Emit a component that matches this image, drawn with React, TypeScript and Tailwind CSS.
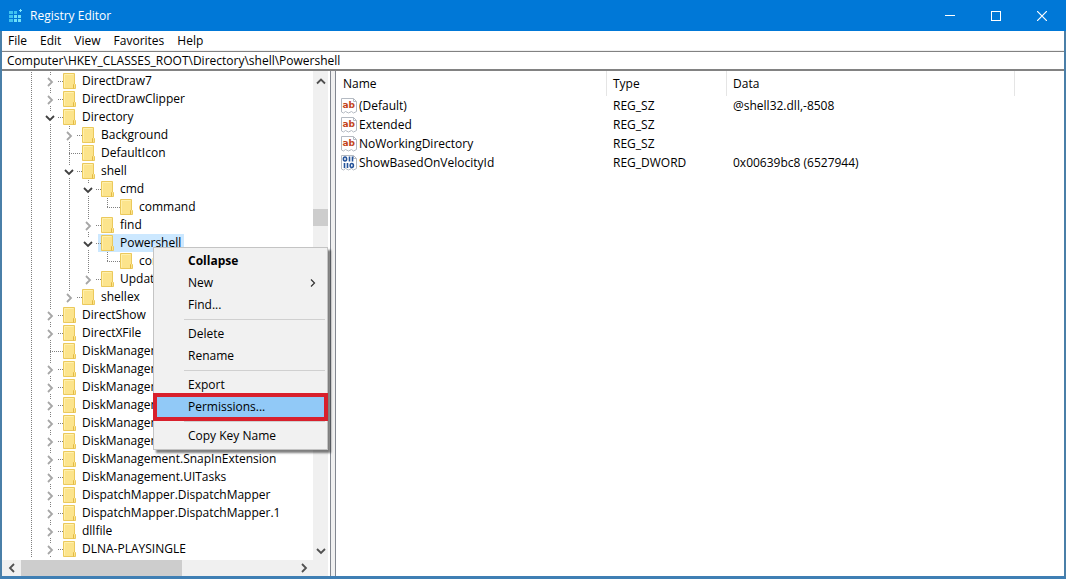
import React from "react";

type TreeNode = {
  name: string;
  depth: number;
  state: "open" | "closed" | "leaf";
  selected?: boolean;
};

const nodes: TreeNode[] = [
  { name: "DirectDraw7", depth: 0, state: "closed" },
  { name: "DirectDrawClipper", depth: 0, state: "closed" },
  { name: "Directory", depth: 0, state: "open" },
  { name: "Background", depth: 1, state: "closed" },
  { name: "DefaultIcon", depth: 1, state: "leaf" },
  { name: "shell", depth: 1, state: "open" },
  { name: "cmd", depth: 2, state: "open" },
  { name: "command", depth: 3, state: "leaf" },
  { name: "find", depth: 2, state: "closed" },
  { name: "Powershell", depth: 2, state: "open", selected: true },
  { name: "command", depth: 3, state: "leaf" },
  { name: "Update", depth: 2, state: "closed" },
  { name: "shellex", depth: 1, state: "closed" },
  { name: "DirectShow", depth: 0, state: "closed" },
  { name: "DirectXFile", depth: 0, state: "closed" },
  { name: "DiskManagement", depth: 0, state: "leaf" },
  { name: "DiskManagement", depth: 0, state: "closed" },
  { name: "DiskManagement", depth: 0, state: "closed" },
  { name: "DiskManagement", depth: 0, state: "closed" },
  { name: "DiskManagement", depth: 0, state: "closed" },
  { name: "DiskManagement", depth: 0, state: "closed" },
  { name: "DiskManagement.SnapInExtension", depth: 0, state: "closed" },
  { name: "DiskManagement.UITasks", depth: 0, state: "closed" },
  { name: "DispatchMapper.DispatchMapper", depth: 0, state: "closed" },
  { name: "DispatchMapper.DispatchMapper.1", depth: 0, state: "closed" },
  { name: "dllfile", depth: 0, state: "closed" },
  { name: "DLNA-PLAYSINGLE", depth: 0, state: "closed" },
];

const values = [
  { name: "(Default)", type: "REG_SZ", data: "@shell32.dll,-8508" },
  { name: "Extended", type: "REG_SZ", data: "" },
  { name: "NoWorkingDirectory", type: "REG_SZ", data: "" },
  { name: "ShowBasedOnVelocityId", type: "REG_DWORD", data: "0x00639bc8 (6527944)" },
];

// true when a sibling at this depth still follows below the row
function continues(index: number, depth: number) {
  if (depth === 0) return true;
  for (let i = index + 1; i < nodes.length; i++) {
    if (nodes[i].depth < depth) return false;
    if (nodes[i].depth === depth) return true;
  }
  return false;
}

function Chevron({ dir, className }: { dir: "up" | "down" | "left" | "right"; className?: string }) {
  const paths = {
    up: "M1 7.5 5 3.5 9 7.500",
    down: "M1 3 5 7 9 3",
    left: "M7 1 3 5 7 9",
    right: "M3 1 7 5 3 9",
  };
  return (
    <svg viewBox="0 0 10 10" className={`size-[10px] ${className ?? ""}`} fill="none" stroke="currentColor" strokeWidth="1.800">
      <path d={paths[dir]} />
    </svg>
  );
}

function Guide({ d }: { d: string }) {
  return (
    <svg viewBox="0 0 19 18" className="h-[18px] w-[19px] shrink-0" fill="none" stroke="#808080" strokeDasharray="1 1" shapeRendering="crispEdges">
      <path d={d} />
    </svg>
  );
}

function FolderIcon() {
  return (
    <svg viewBox="0 0 17 18" className="h-[18px] w-[17px] shrink-0" fill="none">
      <path d="M0 9.5h3" stroke="#808080" strokeDasharray="1 1" shapeRendering="crispEdges" />
      <path d="M3.5 1.5h11v10l1 1v4h-12z" fill="#fce48c" stroke="#ebc95c" />
      <path d="M13.5 16.5v-4l1-1" stroke="#e3b944" />
      <path d="M4.5 15.5v-13h9" stroke="#fff0ac" />
    </svg>
  );
}

function TreeRow({ node, index }: { node: TreeNode; index: number }) {
  const more = continues(index, node.depth);
  return (
    <li className="flex h-[18px] pl-[20px]" role="treeitem" aria-selected={!!node.selected}>
      <Guide d="M9.5 0v18" />
      {Array.from({ length: node.depth }, (_, level) => (
        <Guide key={level} d={continues(index, level) ? "M9.5 0v18" : ""} />
      ))}
      {node.state === "leaf" ? (
        <Guide d={more ? "M9.5 0v18M9 9.5h10" : "M9.5 0v10M9 9.5h10"} />
      ) : (
        <button className="relative grid h-[18px] w-[19px] shrink-0 place-items-center" aria-label={`Toggle ${node.name}`}>
          <Guide d={more ? "M9.5 0v4M9.5 16v2M17 9.5h2" : "M9.5 0v4M17 9.5h2"} />
          <span className="absolute inset-0 flex items-end pb-[3px] pl-[4px]">
            <Chevron
              dir={node.state === "open" ? "down" : "right"}
              className={node.state === "open" ? "text-[#404040]" : "text-[#a6a6a6]"}
            />
          </span>
        </button>
      )}
      <button className={`flex items-center pr-[3px] ${node.selected ? "bg-[#cce8ff]" : ""}`}>
        <FolderIcon />
        <span className="pl-[5px] whitespace-nowrap leading-[18px]">{node.name}</span>
      </button>
    </li>
  );
}

function MenuItem({ label, bold, submenu, active }: { label: string; bold?: boolean; submenu?: boolean; active?: boolean }) {
  return (
    <button
      role="menuitem"
      className={`flex h-[22px] w-full items-center justify-between pr-[9px] pl-[32px] ${bold ? "font-bold" : ""} ${
        active ? "relative z-10 bg-[#91c9f7] outline-4 -outline-offset-1 outline-[#d8202c]" : ""
      }`}
    >
      {label}
      {submenu && (
        <svg viewBox="0 0 6 10" className="h-[10px] w-[6px]" fill="none" stroke="#333" strokeWidth="1.2">
          <path d="M1 1.5 4.5 5 1 8.5" />
        </svg>
      )}
    </button>
  );
}

function Separator() {
  return <div role="separator" className="my-[3px] ml-[28px] h-px bg-[#d0d0d0]" />;
}

function ContextMenu() {
  return (
    <div
      role="menu"
      className="absolute top-[176px] left-[151px] z-20 w-[175px] border border-[#c4c4c4] bg-[#f1f1f1] p-[2px] shadow-[3px_3px_2px_rgba(0,0,0,0.5)]"
    >
      <MenuItem label="Collapse" bold />
      <MenuItem label="New" submenu />
      <MenuItem label="Find..." />
      <Separator />
      <MenuItem label="Delete" />
      <MenuItem label="Rename" />
      <Separator />
      <MenuItem label="Export" />
      <MenuItem label="Permissions..." active />
      <Separator />
      <MenuItem label="Copy Key Name" />
    </div>
  );
}

function ValueIcon({ binary }: { binary: boolean }) {
  return (
    <svg viewBox="0 0 16 18" className="h-[18px] w-[16px] shrink-0" fontFamily="'DejaVu Sans', sans-serif" fontWeight="bold">
      <path d="M.5 1.500h12l3 3v10l-3 1.500-2-1.500-3 1.500-3-1.500-2 1.500-2-1z" fill="#fff" stroke="#b4bac2" />
      <path d="M12.5 1.500v3h3" fill="none" stroke="#b4bac2" />
      {binary ? (
        <g stroke="#24539a" fill="none" strokeWidth="1.600">
          <ellipse cx="4" cy="5" rx="1.600" ry="2" />
          <path d="M8.500 2.500v5M11.500 2.500v5M3.500 9v5M6.500 9v5" />
          <ellipse cx="10.800" cy="11.500" rx="1.600" ry="2" />
        </g>
      ) : (
        <text x="1.500" y="10.500" fontSize="9" fill="#c2441c">ab</text>
      )}
    </svg>
  );
}

function KeyTree() {
  return (
    <section className="relative flex w-[329px] shrink-0 flex-col border-r border-[#828790] bg-white">
      <div className="flex min-h-0 flex-1">
        <ul role="tree" className="min-w-0 flex-1 overflow-hidden pt-px">
          {nodes.map((node, i) => (
            <TreeRow key={i} node={node} index={i} />
          ))}
        </ul>
        <div className="mr-[2px] flex w-[15px] flex-col bg-[#f0f0f0] text-[#505050]">
          <button className="grid h-[20px] place-items-center" aria-label="Scroll up">
            <Chevron dir="up" />
          </button>
          <div className="flex-1 pt-[118px]">
            <div className="h-[17px] bg-[#cdcdcd]" />
          </div>
          <button className="grid h-[19px] place-items-center" aria-label="Scroll down">
            <Chevron dir="down" />
          </button>
        </div>
      </div>
      <div className="mr-[2px] flex h-[16px] bg-[#f0f0f0] pr-[16px] text-[#505050]">
        <button className="grid w-[19px] place-items-center" aria-label="Scroll left">
          <Chevron dir="left" />
        </button>
        <div className="flex-1">
          <div className="h-full w-[161px] bg-[#cdcdcd]" />
        </div>
        <button className="grid w-[17px] place-items-center" aria-label="Scroll right">
          <Chevron dir="right" />
        </button>
      </div>
      <ContextMenu />
    </section>
  );
}

function ValueTable() {
  return (
    <section className="min-w-0 flex-1 border-l border-[#828790] bg-white">
      <table className="w-full table-fixed border-separate border-spacing-0 text-left">
        <colgroup>
          <col className="w-[271px]" />
          <col className="w-[120px]" />
          <col className="w-[288px]" />
          <col />
        </colgroup>
        <thead>
          <tr className="h-[25px]">
            <th className="border-r border-[#e5e5e5] p-0 pl-[7px] font-normal">Name</th>
            <th className="border-r border-[#e5e5e5] p-0 pl-[6px] font-normal">Type</th>
            <th className="border-r border-[#e5e5e5] p-0 pl-[6px] font-normal">Data</th>
            <td />
          </tr>
        </thead>
        <tbody>
          {values.map((value) => (
            <tr key={value.name} className="h-[19px]">
              <td className="p-0 pl-[5px]">
                <div className="flex items-center gap-[2px]">
                  <ValueIcon binary={value.type === "REG_DWORD"} />
                  {value.name}
                </div>
              </td>
              <td className="p-0 pl-[6px]">{value.type}</td>
              <td className="p-0 pl-[6px]">{value.data}</td>
              <td />
            </tr>
          ))}
        </tbody>
      </table>
    </section>
  );
}

function TitleBar() {
  return (
    <header className="flex h-[31px] shrink-0 items-center bg-[#0078d7] pr-px pl-[9px] text-white">
      <svg viewBox="0 0 14 14" className="size-[14px]">
        <path d="M0 2h4v3H0zM5 2h3v3H5zM0 6h4v3H0zM0 10h4v3H0z" fill="#3fc3f0" />
        <path d="M5 6h3v3H5zM9 6h3v3H9zM5 10h3v3H5zM9 10h3v3H9z" fill="#6fe0f8" />
        <path d="M11 0h1v1h1v1h-1v1h-1V2h-1V1h1z" fill="#7fe6ff" />
      </svg>
      <h1 className="flex-1 pl-[7px]">Registry Editor</h1>
      <button className="grid h-full w-[46px] place-items-center" aria-label="Minimize">
        <svg viewBox="0 0 10 10" className="size-[10px]" stroke="currentColor" shapeRendering="crispEdges">
          <path d="M0 4.500h10" />
        </svg>
      </button>
      <button className="grid h-full w-[45px] place-items-center" aria-label="Maximize">
        <svg viewBox="0 0 10 10" className="size-[10px]" fill="none" stroke="currentColor" shapeRendering="crispEdges">
          <path d="M.5.5h9v9h-9z" />
        </svg>
      </button>
      <button className="grid h-full w-[47px] place-items-center" aria-label="Close">
        <svg viewBox="0 0 10 10" className="size-[10px]" stroke="currentColor" strokeWidth="1.200">
          <path d="M0 0l10 10M10 0 0 10" />
        </svg>
      </button>
    </header>
  );
}

export default function App() {
  return (
    <div className="flex h-screen flex-col overflow-hidden bg-[#f0f0f0] font-['Open_Sans',sans-serif] text-[12px] leading-[16px] text-black">
      <TitleBar />
      <div className="flex min-h-0 flex-1 flex-col border-x-2 border-b-3 border-x-[#4a7fa8] border-b-[#3f7fb4]">
        <nav className="flex h-[20px] shrink-0 items-center gap-[13px] border-b border-[#f0f0f0] bg-white pl-[6px]">
          <button>File</button>
          <button>Edit</button>
          <button>View</button>
          <button>Favorites</button>
          <button>Help</button>
        </nav>
        <input
          aria-label="Address"
          className="h-[20px] shrink-0 border-t border-b-2 border-[#828282] bg-white px-[5px] outline-none"
          defaultValue="Computer\HKEY_CLASSES_ROOT\Directory\shell\Powershell"
        />
        <main className="flex min-h-0 flex-1 gap-[4px]">
          <KeyTree />
          <ValueTable />
        </main>
      </div>
    </div>
  );
}
